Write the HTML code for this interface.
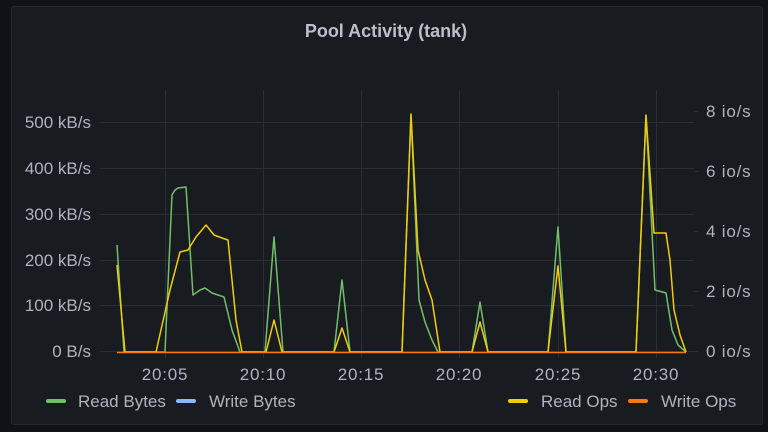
<!DOCTYPE html>
<html><head><meta charset="utf-8"><style>
html,body{margin:0;padding:0;width:768px;height:432px;background:#111217;overflow:hidden;font-family:"Liberation Sans",sans-serif}
.panel{position:absolute;left:11px;top:6px;width:750px;height:417px;background:#181b1f;border:1px solid #25282d;border-radius:3px}
svg{position:absolute;left:0;top:0}
</style></head><body>
<div class="panel"></div>
<svg width="768" height="432" font-family="Liberation Sans, sans-serif">
<text x="386" y="37" text-anchor="middle" fill="#ccccdc" font-size="18" font-weight="bold" opacity="0.92">Pool Activity (tank)</text>
<g stroke="#2a2d33" stroke-width="1">
<line x1="100" y1="122.5" x2="694" y2="122.5"/><line x1="100" y1="168.5" x2="694" y2="168.5"/>
<line x1="100" y1="214.5" x2="694" y2="214.5"/><line x1="100" y1="260.5" x2="694" y2="260.5"/>
<line x1="100" y1="305.5" x2="694" y2="305.5"/><line x1="100" y1="351.5" x2="694" y2="351.5"/>
<line x1="165.5" y1="90" x2="165.5" y2="358"/><line x1="263.5" y1="90" x2="263.5" y2="358"/>
<line x1="361.5" y1="90" x2="361.5" y2="358"/><line x1="459.5" y1="90" x2="459.5" y2="358"/>
<line x1="558.5" y1="90" x2="558.5" y2="358"/><line x1="656.5" y1="90" x2="656.5" y2="358"/>
<line x1="694" y1="111.5" x2="698" y2="111.5"/><line x1="694" y1="171.5" x2="698" y2="171.5"/>
<line x1="694" y1="231.5" x2="698" y2="231.5"/><line x1="694" y1="291.5" x2="698" y2="291.5"/>
<line x1="694" y1="351.5" x2="698" y2="351.5"/>
</g>
<g fill="#ccccdc" font-size="17" opacity="0.85">
<g text-anchor="end">
<text x="91" y="128">500 kB/s</text><text x="91" y="174">400 kB/s</text><text x="91" y="220">300 kB/s</text>
<text x="91" y="266">200 kB/s</text><text x="91" y="311">100 kB/s</text><text x="91" y="357">0 B/s</text>
</g>
<g letter-spacing="0.8">
<text x="706" y="117">8 io/s</text><text x="706" y="177">6 io/s</text><text x="706" y="237">4 io/s</text>
<text x="706" y="297">2 io/s</text><text x="706" y="357">0 io/s</text>
</g>
<g text-anchor="middle" letter-spacing="0.8">
<text x="165" y="380">20:05</text><text x="263" y="380">20:10</text><text x="361" y="380">20:15</text>
<text x="459" y="380">20:20</text><text x="558" y="380">20:25</text><text x="656" y="380">20:30</text>
</g>
<text x="78" y="407">Read Bytes</text><text x="209" y="407">Write Bytes</text>
<text x="541" y="407">Read Ops</text><text x="661" y="407">Write Ops</text>
</g>
<g stroke-width="4" stroke-linecap="round">
<line x1="48" y1="401" x2="64" y2="401" stroke="#73bf69"/>
<line x1="178" y1="401" x2="194" y2="401" stroke="#8ab8ff"/>
<line x1="510" y1="401" x2="526" y2="401" stroke="#f2cc0c"/>
<line x1="630" y1="401" x2="646" y2="401" stroke="#ff780a"/>
</g>
<g fill="none" stroke-width="1.5" stroke-linejoin="round">
<polyline stroke="#73bf69" points="117,245 124,352 165,352 172,195 175,190 178,188 186,187 193,295 200,290 205,288 212,293 224,297 232,330 240,352 265,352 274,237 283,352 334,352 342,280 350,352 402,352 411,115 419,300 425,322 432,340 438,352 472,352 480,302 488,352 548,352 558,227 566,352 636,352 646,116 655,290 666,293 672,330 678,345 686,352"/>
<polyline stroke="#f2cc0c" points="117,265 125,352 156,352 170,290 180,252 188,250 196,237 206,225 214,235 222,238 228,240 236,320 242,352 266,352 274,320 282,352 334,352 342,328 350,352 402,352 411,114 418,250 425,280 432,300 440,352 472,352 480,322 488,352 548,352 558,266 566,352 636,352 646,115 654,233 666,233 670,260 674,310 680,335 686,352"/>
<line x1="117" y1="352.5" x2="686" y2="352.5" stroke="#ff780a"/>
</g>
</svg>
</body></html>
